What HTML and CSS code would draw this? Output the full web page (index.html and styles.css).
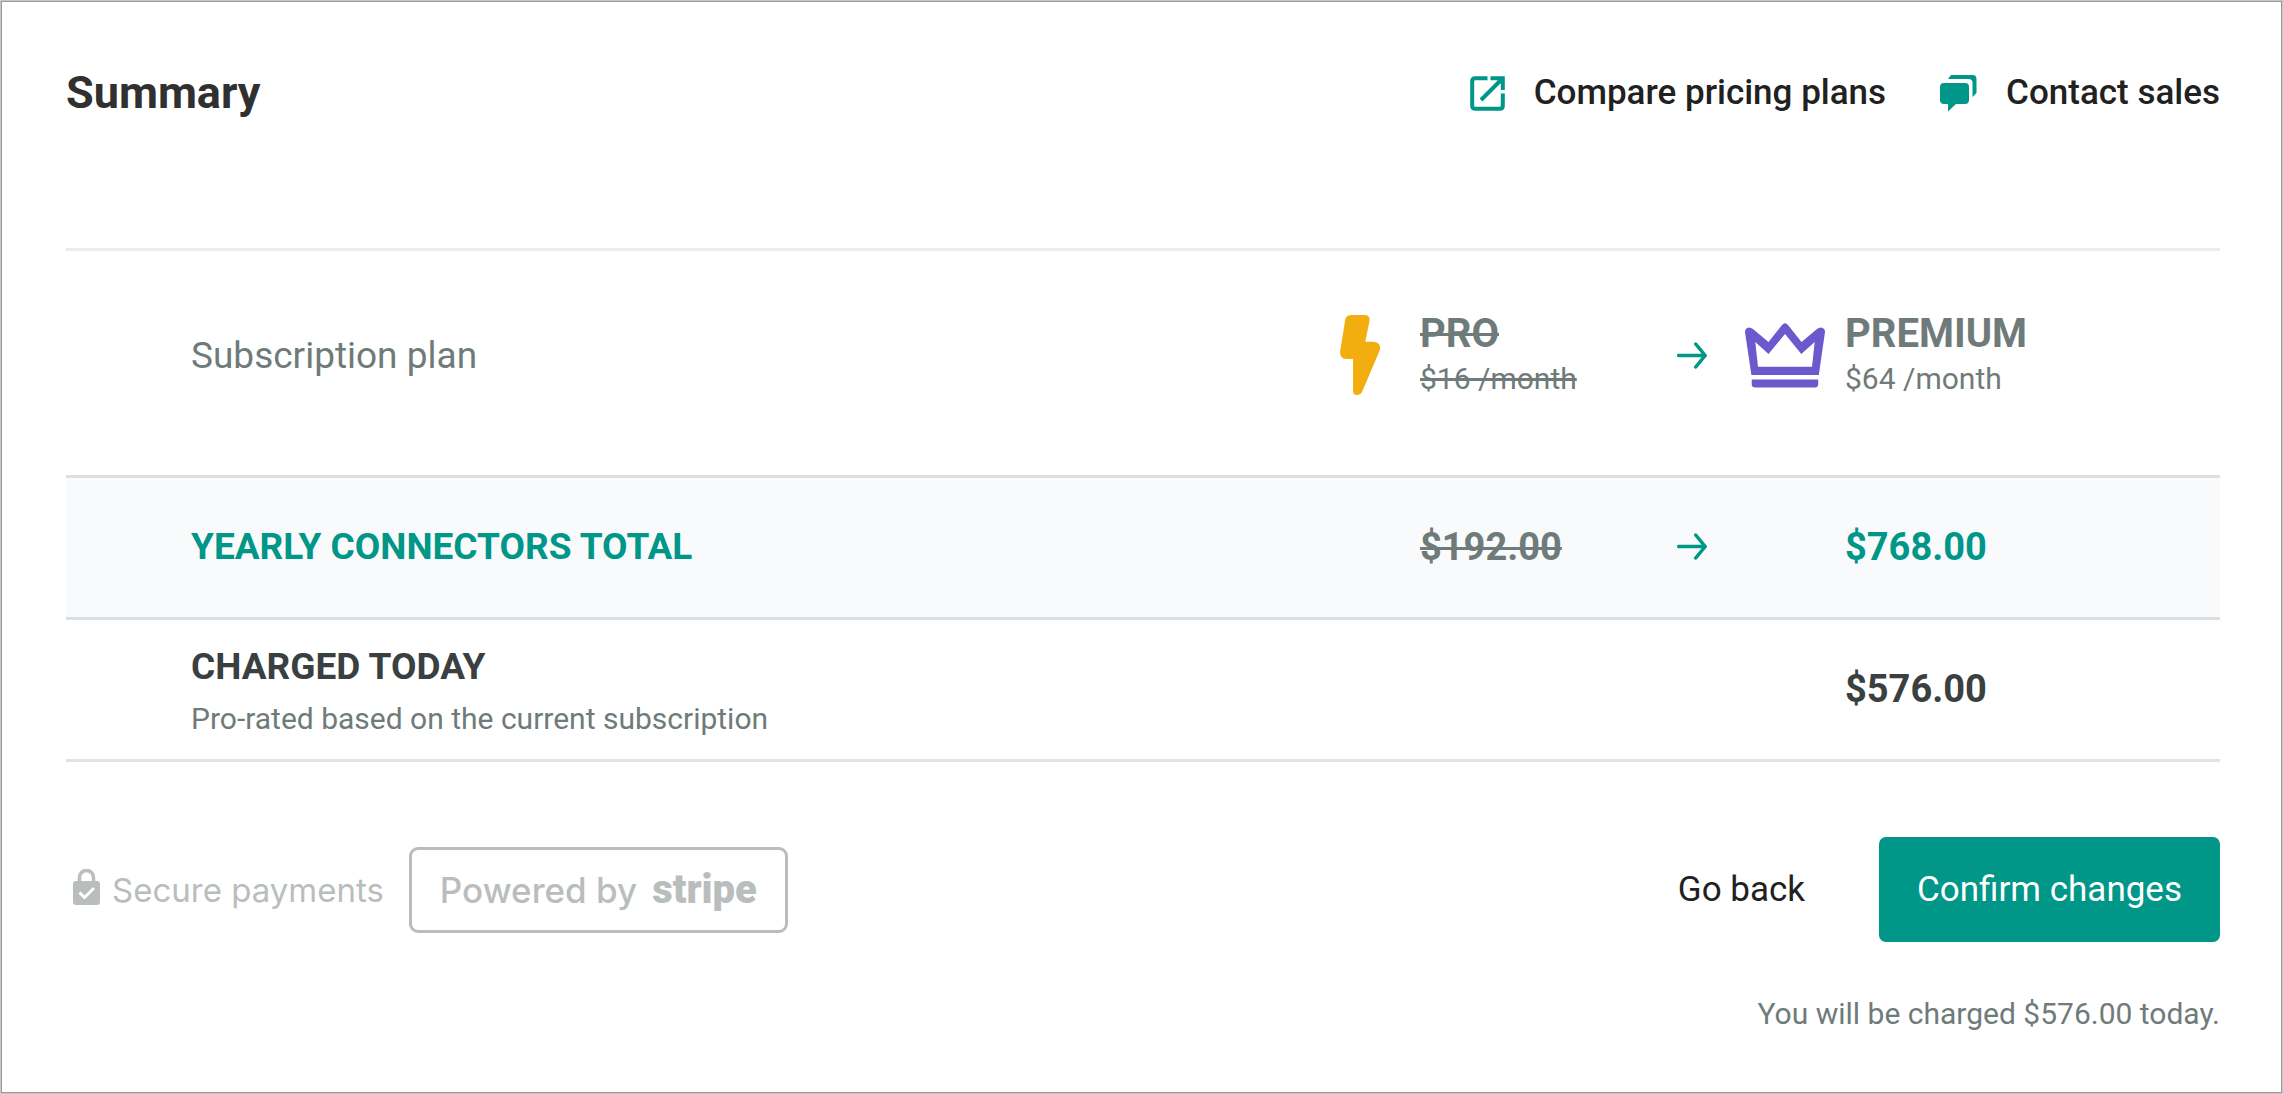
FILE: index.html
```html
<!DOCTYPE html>
<html lang="en">
<head>
  <meta charset="UTF-8">
  <meta name="viewport" content="width=device-width, initial-scale=1.0">
  <title>Summary</title>
  <link rel="stylesheet" href="styles.css">
</head>
<body>
  <main class="card">
    <header class="header">
      <h1>Summary</h1>
      <nav class="links">
        <a href="#pricing">
          <svg class="icon-open" viewBox="0 0 35 35" aria-hidden="true">
            <path d="M17.5 2.2H5.2Q2.2 2.2 2.2 5.2V29.8Q2.2 32.8 5.2 32.8H29.8Q32.8 32.8 32.8 29.8V17.5M20.5 2.2H32.8V14M32 3L11 24"/>
          </svg>
          Compare pricing plans
        </a>
        <a href="#sales">
          <svg class="icon-chat" viewBox="0 0 37 37" aria-hidden="true">
            <path d="M4 8H25Q29 8 29 12V25Q29 29 25 29H16L8 36.5V29H4Q0 29 0 25V12Q0 8 4 8Z"/>
            <path d="M8 4L11 0H32.5Q36.5 0 36.5 4V18L32.5 22V8Q32.5 4 28.5 4Z"/>
          </svg>
          Contact sales
        </a>
      </nav>
    </header>

    <table class="summary">
      <colgroup>
        <col>
        <col class="col-old-icon">
        <col class="col-old">
        <col class="col-arrow">
        <col class="col-new-icon">
        <col class="col-new">
      </colgroup>
      <tbody>
        <tr class="plan">
          <th scope="row">Subscription plan</th>
          <td>
            <svg class="icon-bolt" viewBox="0 0 40 80" aria-hidden="true">
              <path d="M5 6Q5.5 0 11 0H24Q30.5 0 29.5 6L25.3 26.7H33Q42 27.5 39.5 36L22 77Q20.5 80 17 80Q13 80 13 75.5V44H6Q0 43.5 0 37Z"/>
            </svg>
          </td>
          <td class="old"><s class="name">PRO</s><s class="price">$16 /month</s></td>
          <td>
            <svg class="icon-arrow" viewBox="0 0 30 27" aria-hidden="true">
              <path d="M1.7 13.5H28M18.7 2L28.2 13.5L18.7 25"/>
            </svg>
          </td>
          <td>
            <svg class="icon-crown" viewBox="0 0 80 65" aria-hidden="true">
              <path fill-rule="evenodd" d="M0 9Q0 5 4 4.5Q6 4.5 8 6L23.5 19L37 2Q40 -1.5 43 2L56.5 19L72 6Q74 4.5 76 4.5Q80 5 80 9L73.8 52H6.4ZM10.3 19L13 43.7H67L69.7 19L56.3 31L40 11L23.5 31Z"/>
              <path d="M6.7 56.5H73.2V61Q73.2 64.5 69.7 64.5H10.2Q6.7 64.5 6.7 61Z"/>
            </svg>
          </td>
          <td><span class="name">PREMIUM</span><span class="price">$64 /month</span></td>
        </tr>
        <tr class="total">
          <th scope="row">YEARLY CONNECTORS TOTAL</th>
          <td></td>
          <td class="amount old"><s>$192.00</s></td>
          <td>
            <svg class="icon-arrow" viewBox="0 0 30 27" aria-hidden="true">
              <path d="M1.7 13.5H28M18.7 2L28.2 13.5L18.7 25"/>
            </svg>
          </td>
          <td></td>
          <td class="amount">$768.00</td>
        </tr>
        <tr class="charged">
          <th scope="row">CHARGED TODAY<small>Pro-rated based on the current subscription</small></th>
          <td></td>
          <td></td>
          <td></td>
          <td></td>
          <td class="amount">$576.00</td>
        </tr>
      </tbody>
    </table>

    <footer class="footer">
      <div class="secure">
        <svg class="icon-lock" viewBox="0 0 27 36" aria-hidden="true">
          <path class="shackle" d="M6.5 13V8.5A7 7 0 0 1 20.5 8.5V13"/>
          <rect y="12" width="27" height="24" rx="3"/>
          <path class="tick" d="M6.5 23.5L11.5 28.5L21 19"/>
        </svg>
        <span>Secure payments</span>
        <div class="stripe">Powered by <strong>stripe</strong></div>
      </div>
      <div class="actions">
        <button type="button" class="back">Go back</button>
        <button type="button" class="confirm">Confirm changes</button>
      </div>
    </footer>
    <p class="note">You will be charged $576.00 today.</p>
  </main>
</body>
</html>
```
FILE: styles.css
```css
* {box-sizing: border-box;}
body {margin: 0; font-family: Roboto, sans-serif; color: #6f7b7a; background: white;}
svg {display: block; flex: none;}

.card {min-height: 100vh; padding: 66px 62px 40px 65px; border: 1px solid #c8c8c8; outline: 1px solid #999; outline-offset: -2px;}

.header {display: flex; justify-content: space-between; align-items: center; padding-bottom: 129px;}
.header h1 {margin: 0; font-size: 45px; line-height: 52px; color: #303030;}
.links {display: flex; gap: 54px;}
.links a {display: flex; align-items: center; gap: 29px; font-size: 35px; line-height: 52px; font-weight: 500; color: #212121; text-decoration: none;}

.icon-open {width: 35px; fill: none; stroke: #009688; stroke-width: 4;}
.icon-chat {width: 37px; fill: #009688;}
.icon-bolt {width: 40px; fill: #f2ae0f;}
.icon-crown {width: 80px; fill: #6a5acd;}
.icon-arrow {width: 30px; fill: none; stroke: #009688; stroke-width: 3.5; stroke-linecap: round; stroke-linejoin: round;}
.icon-lock {width: 27px; margin-bottom: 6px; fill: #b9bebd;}
.icon-lock .shackle {fill: none; stroke: #b9bebd; stroke-width: 3.5;}
.icon-lock .tick {fill: none; stroke: white; stroke-width: 3;}

.summary {width: 100%; table-layout: fixed; border-spacing: 0; border-top: 3px solid #ebebeb;}
.col-old-icon {width: 80px;}
.col-old {width: 257px;}
.col-arrow {width: 68px;}
.col-new-icon {width: 100px;}
.col-new {width: 375px;}
.summary th, .summary td {height: 142px; padding: 0 0 2px; text-align: left; vertical-align: middle; border-bottom: 3px solid #dcdfe2;}
.summary th {padding-left: 125px; font-size: 37px;}
.summary .plan th, .summary .plan td {height: 227px; padding-bottom: 16px;}
.summary .plan th {font-weight: 400;}
.name, .price {display: block; width: fit-content;}
.name {font-size: 40px; line-height: 48px; font-weight: 700;}
.price {font-size: 30px; line-height: 42px;}
.amount {font-size: 38px; font-weight: 700;}
s {text-decoration-thickness: 3px;}
.total {color: #009688; background: #f9fafc;}
.total .old {color: #6f7b7a;}
.charged {color: #3a4040;}
.charged th {line-height: 60px;}
.charged th, .charged td {border-color: #e0e3e3;}
.charged small {display: block; font-size: 30px; line-height: 44px; font-weight: 400; color: #6f7b7a;}

.footer {display: flex; justify-content: space-between; align-items: center; padding-top: 75px;}
.secure {display: flex; align-items: center; padding-left: 7px; font: 33px Inter, sans-serif; color: #b9bebd;}
.secure span {margin: 0 25px 0 12px;}
.stripe {display: flex; align-items: baseline; gap: 15px; padding: 0 28px; border: 3px solid #b9bebd; border-radius: 9px; font-size: 35px; line-height: 80px; font-weight: 500;}
.stripe strong {font-family: Roboto, sans-serif; font-size: 40px; font-weight: 900;}
.actions {display: flex;}
.actions button {padding: 32px 38px; border: 0; border-radius: 7px; font: 35px/41px Roboto, sans-serif; cursor: pointer;}
.actions .back {color: #212121; background: none;}
.actions .confirm {margin-left: 36px; color: white; background: #009688;}
.note {margin: 52px 0 0; font-size: 30px; line-height: 40px; text-align: right;}
```
